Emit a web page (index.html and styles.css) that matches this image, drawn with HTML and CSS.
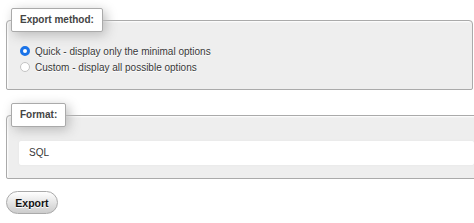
FILE: index.html
```html
<!DOCTYPE html>
<html lang="en">
<head>
  <meta charset="UTF-8">
  <title>Export</title>
  <link rel="stylesheet" href="styles.css">
</head>
<body>
  <form class="export-form">
    <fieldset class="group">
      <legend>Export method:</legend>
      <label class="radio-row">
        <input type="radio" name="method" checked>
        Quick - display only the minimal options
      </label>
      <label class="radio-row">
        <input type="radio" name="method">
        Custom - display all possible options
      </label>
    </fieldset>

    <fieldset class="group group-format">
      <legend>Format:</legend>
      <div class="select-box">SQL</div>
    </fieldset>

    <button class="export-btn" type="button">Export</button>
  </form>
</body>
</html>
```

FILE: styles.css
```css
html, body {
  overflow: hidden;
}
body {
  margin: 0;
  padding: 8px 1px 0 6px;
  background: #fff;
  font-family: "Liberation Sans", Arial, sans-serif;
  font-size: 10px;
  color: #383838;
}
.group {
  margin: 0;
  padding: 11px 12px 14px;
  border: 1px solid #aaa;
  border-radius: 4px 4px 2px 2px;
  background: #eee;
  box-shadow: 1px 1px 2px #fff inset;
  text-shadow: 0 1px 0 #fff;
}
.group-format {
  margin-top: 13px;
  padding-top: 14px;
  padding-bottom: 13px;
}
.group legend {
  margin-left: -8px;
  padding: 0 8px;
  height: 22px;
  line-height: 22px;
  font-weight: bold;
  color: #444;
  background: #fff;
  border: 1px solid #aaa;
  border-radius: 2px;
  box-shadow: 3px 3px 12px #bbb;
}
.radio-row {
  display: flex;
  align-items: center;
  height: 16px;
}
.radio-row input {
  appearance: none;
  box-sizing: border-box;
  width: 10px;
  height: 10px;
  margin: 0 5px 0 1px;
  border: 1px solid #c4c4c4;
  border-radius: 50%;
  background: #fff;
}
.radio-row input:checked {
  border: 3px solid #1a73e8;
}
.select-box {
  box-sizing: border-box;
  width: 455px;
  height: 24px;
  line-height: 24px;
  padding-left: 10px;
  background: #fff;
  border-radius: 2px;
  box-shadow: 0 0 2px #e2e2e2;
  text-shadow: none;
}
.export-btn {
  margin-top: 12px;
  width: 52px;
  height: 23px;
  padding: 0;
  font-family: inherit;
  font-size: 10.5px;
  font-weight: bold;
  color: #111;
  border: 1px solid #aaa;
  border-radius: 12px;
  background: linear-gradient(#fff, #ccc);
  text-shadow: 0 1px 0 #fff;
  cursor: pointer;
}
```
